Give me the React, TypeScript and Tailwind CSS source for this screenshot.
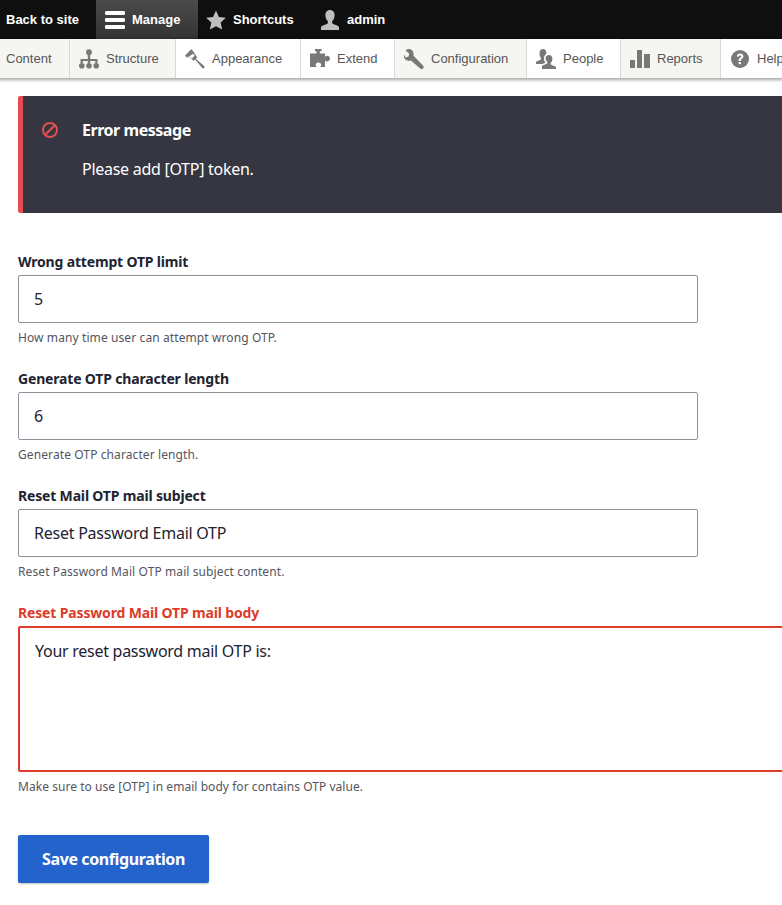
const Sans = "font-['Noto_Sans',sans-serif]";

function Menu() {
  return <svg width="20" height="20" viewBox="0 0 20 20" fill="#fff"><rect x="0" y="1" width="20" height="4" rx="1.2" /><rect x="0" y="8" width="20" height="4" rx="1.2" /><rect x="0" y="15" width="20" height="4" rx="1.2" /></svg>;
}
function Star() {
  return <svg width="20" height="20" viewBox="0 0 20 20" fill="#bebebe"><path d="M10 .6l2.9 6.4 7 .8-5.2 4.7 1.4 6.9L10 16.2l-6.1 3.2 1.4-6.9L.1 7.8l7-.8z" /></svg>;
}
function User() {
  return <svg width="20" height="20" viewBox="0 0 20 20" fill="#bebebe"><path d="M10 0c2.8 0 4.6 2.2 4.6 5.2 0 2.600-1.100 4.800-2.500 6v1.600c0 .8 1 1.200 3 1.900 2.200.8 3.900 1.400 3.900 2.500V20H1v-2.800c0-1.100 1.700-1.700 3.900-2.500 2-.7 3-1.100 3-1.900v-1.600c-1.400-1.200-2.500-3.400-2.500-6C5.400 2.200 7.200 0 10 0z" /></svg>;
}
function StructureI() {
  return <svg width="20" height="20" viewBox="0 0 20 20" fill="#787878"><circle cx="10" cy="3.2" r="2.900" /><rect x="8.800" y="5" width="2.400" height="9" /><path d="M1.500 14v-4h17v4h-2.200v-1.900H3.700V14z" /><circle cx="2.800" cy="16.800" r="2.800" /><circle cx="10" cy="16.800" r="2.800" /><circle cx="17.200" cy="16.800" r="2.800" /></svg>;
}
function Appearance() {
  return <svg width="20" height="20" viewBox="0 0 20 20" fill="#787878"><path fillRule="evenodd" d="M6.500 0L0 6.500l2.200 2.200 1.200-1.100 3.800 2.700 1.600 1.600 1.400-1.400 7 8.400c.5.600 1.400.7 2 .1.600-.6.500-1.500-.1-2L10.800 9.700l1.400-1.500zM8.300 4.800l1.400 2-2.800 2.600-3-2z" /></svg>;
}
function Extend() {
  return <svg width="20" height="20" viewBox="0 0 20 20" fill="#787878"><path d="M5 0h6.500v2.200H9.800v2.300H15V8c.5-.9 1.200-1.300 2-1.300 1.600 0 3 1.200 3 2.900s-1.400 2.900-3 2.900c-.8 0-1.500-.4-2-1.300V18h-5c.8-.5 1.200-1.200 1.200-2 0-1.300-1.200-2.500-2.800-2.500S5.600 14.700 5.600 16c0 .8.400 1.500 1.200 2H0V4.500h6.500V2.200H5z" /></svg>;
}
function Wrench() {
  return <svg width="20" height="20" viewBox="0 0 20 20" fill="#787878"><path d="M6.500.2C4.700-.3 2.800.3 1.400 1.500l3.800 3-.6 3-3 1L-.1 5.400C-.6 7.300 0 9.200 1.400 10.500c1.500 1.400 3.600 1.800 5.500 1.100l9.300 7.800c.8.800 2.100.8 2.900 0 .8-.8.8-2.100-.1-2.900L9.500 6.800C10 4 8.900 1.100 6.500.2z" /></svg>;
}
function People() {
  return <svg width="20" height="20" viewBox="0 0 20 20" fill="#787878"><path d="M7 0c2 0 3.300 1.500 3.300 3.500 0 .6-.1 1.200-.3 1.800-1.300.9-2 2.500-2 4.200 0 1.500.5 2.900 1.400 3.900v.3c-.6.3-2.100.7-3.300 1.300L0 15v-1.900c0-.7 1.200-1.200 2.800-1.700 1.400-.5 2.200-.7 2.200-1.300v-1.100C3.900 8 3.500 6 3.500 4 3.500 1.500 5 0 7 0z" /><path d="M13 6c2 0 3.400 1.600 3.400 3.700 0 1.800-.7 3.300-1.700 4.200v1.100c0 .6.800.9 2.300 1.400 1.700.6 3 1 3 1.800V20H6v-2.800c0-.8 1.300-1.200 3-1.800 1.500-.5 2.300-.8 2.300-1.400v-1.100c-1-.9-1.700-2.400-1.700-4.200C9.600 7.600 11 6 13 6z" /></svg>;
}
function Reports() {
  return <svg width="20" height="20" viewBox="0 0 20 20" fill="#787878"><rect x="0" y="11" width="5" height="8" /><rect x="7" y="1" width="5" height="18" /><rect x="14" y="5" width="6" height="14" /></svg>;
}
function Help() {
  return <svg width="20" height="20" viewBox="0 0 20 20"><circle cx="10" cy="10" r="9" fill="#787878" /><path d="M6.800 7.600C6.900 5.600 8.200 4.500 10.100 4.500c1.900 0 3.300 1.100 3.300 2.800 0 1.300-.7 2-1.600 2.600-.8.500-1 .8-1 1.600v.5H8.700v-.7c0-1.300.5-1.900 1.400-2.500.7-.5 1.100-.8 1.100-1.400 0-.6-.5-1-1.100-1-.7 0-1.200.4-1.300 1.300z" fill="#fff" /><rect x="8.700" y="13" width="2.200" height="2.200" fill="#fff" /></svg>;
}

const tray = [
  { label: "Content", w: "w-[70px]", bg: "bg-[#f5f5f2]", pl: "pl-[6px]" },
  { label: "Structure", w: "w-[106px]", bg: "bg-[#f5f5f2]", icon: <StructureI /> },
  { label: "Appearance", w: "w-[125px]", bg: "bg-white", icon: <Appearance /> },
  { label: "Extend", w: "w-[94px]", bg: "bg-white", icon: <Extend /> },
  { label: "Configuration", w: "w-[132px]", bg: "bg-[#f5f5f2]", icon: <Wrench /> },
  { label: "People", w: "w-[94px]", bg: "bg-white", icon: <People /> },
  { label: "Reports", w: "w-[100px]", bg: "bg-[#f5f5f2]", icon: <Reports /> },
  { label: "Help", w: "w-[70px]", bg: "bg-white", icon: <Help /> },
];

function Field({ label, value, help }: { label: string; value: string; help: string }) {
  return (
    <div className="mb-[23px]">
      <label className="block text-[14px] leading-[18px] font-bold tracking-[-0.17px] text-[#222330] mb-[4px]">{label}</label>
      <input readOnly value={value} className="block w-[680px] h-[48px] px-[15px] border border-[#8e929c] rounded-[2px] bg-white text-[16px] tracking-[-0.24px] text-[#222330] outline-none" />
      <p className="mt-[6px] text-[12px] leading-[18px] tracking-[0.1px] text-[#54555e]">{help}</p>
    </div>
  );
}

export default function App() {
  return (
    <div className={`w-[782px] h-[905px] overflow-hidden bg-white ${Sans}`}>
      <div className="h-[39px] bg-[#0f0f0f] flex items-center font-['Liberation_Sans',sans-serif] font-bold text-[13px] text-white">
        <a className="w-[96px] pl-[6px]">Back to site</a>
        <a className="w-[102px] h-full flex items-center pl-[9px] gap-[7px] bg-gradient-to-b from-[#4b4b4b] to-[#333]"><Menu /><span>Manage</span></a>
        <a className="flex items-center pl-[8px] gap-[7px] w-[122px]"><Star /><span>Shortcuts</span></a>
        <a className="flex items-center gap-[7px]"><User /><span>admin</span></a>
      </div>
      <div className="h-[39px] flex font-['Liberation_Sans',sans-serif] text-[13px] text-[#565656] shadow-[0_1px_3px_1px_rgba(0,0,0,0.35)] relative">
        {tray.map((t) => (
          <div key={t.label} className={`${t.w} ${t.bg} shrink-0 h-full flex items-center gap-[7px] border-r border-[#d9d9d6] ${t.pl ?? "pl-[9px]"}`}>
            {t.icon}
            <span>{t.label}</span>
          </div>
        ))}
      </div>
      <main className="pl-[18px] pt-[18px]">
        <div className="w-[764px] h-[117px] bg-[#353641] border-l-[5px] border-[#e84b4f] rounded-l-[2px] flex text-white">
          <div className="w-[59px] pl-[19px] pt-[26px]">
            <svg width="16" height="16" viewBox="0 0 16 16" fill="none" stroke="#e34f4f" strokeWidth="2"><circle cx="8" cy="8" r="7" /><path d="M3.200 12.800L12.800 3.200" /></svg>
          </div>
          <div className="pt-[22px]">
            <p className="text-[16px] leading-[24px] font-bold tracking-[-0.46px]">Error message</p>
            <p className="mt-[15px] text-[16px] leading-[24px] tracking-[-0.28px]">Please add [OTP] token.</p>
          </div>
        </div>
        <form className="mt-[40px]">
          <Field label="Wrong attempt OTP limit" value="5" help="How many time user can attempt wrong OTP." />
          <Field label="Generate OTP character length" value="6" help="Generate OTP character length." />
          <Field label="Reset Mail OTP mail subject" value="Reset Password Email OTP" help="Reset Password Mail OTP mail subject content." />
          <div>
            <label className="block text-[14px] leading-[18px] font-bold tracking-[-0.15px] text-[#dc3b2a] mb-[4px]">Reset Password Mail OTP mail body</label>
            <textarea readOnly value="Your reset password mail OTP is:" className="block w-[780px] h-[146px] px-[15px] pt-[11px] pb-[9px] border-2 border-[#dc3b2a] rounded-[2px] bg-white text-[16px] leading-[24px] tracking-[-0.27px] text-[#222330] outline-none resize-none" />
            <p className="mt-[6px] text-[12px] leading-[18px] tracking-[0.05px] text-[#54555e]">Make sure to use [OTP] in email body for contains OTP value.</p>
          </div>
          <button type="button" className="mt-[39px] w-[191px] h-[48px] rounded-[2px] bg-[#2563cc] text-white font-bold text-[16px] tracking-[-0.39px] shadow-[0_1px_2px_rgba(0,0,0,0.25)]">Save configuration</button>
        </form>
      </main>
    </div>
  );
}
